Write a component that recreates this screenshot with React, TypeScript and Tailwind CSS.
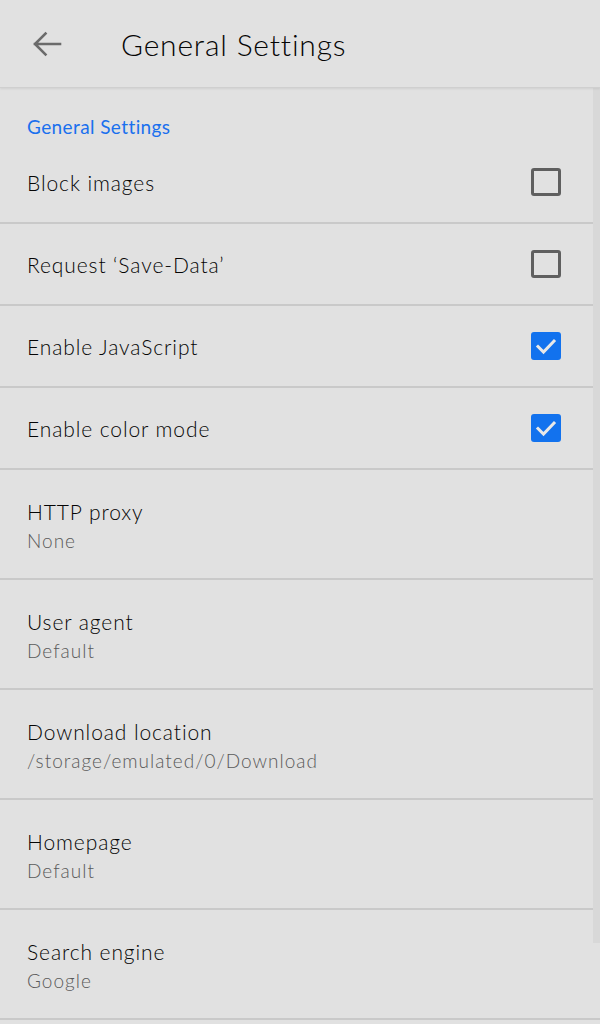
import React from "react";

const font = { fontFamily: "Lato, 'Noto Sans', sans-serif" };

function CheckBox({ checked }: { checked: boolean }) {
  if (checked) {
    return (
      <div className="w-[30px] h-[28px] rounded-[3px] bg-[#1272ee] flex items-center justify-center">
        <svg width="22" height="18" viewBox="0 0 22 18" fill="none">
          <path d="M3 9.5 L8.5 15 L19 4" stroke="#e8e8e8" strokeWidth="3" strokeLinecap="square" />
        </svg>
      </div>
    );
  }
  return <div className="w-[30px] h-[28px] rounded-[3px] border-[3px] border-[#5f5f5f]" />;
}

function ToggleRow({ label, checked }: { label: string; checked: boolean }) {
  return (
    <div className="h-[82px] border-b-2 border-[#c9c9c9] flex items-center justify-between pl-[27px] pr-[39px]">
      <span className="text-[21px] font-light text-[#050505] tracking-[0.9px] pt-[2px]">{label}</span>
      <CheckBox checked={checked} />
    </div>
  );
}

function InfoRow({ label, value }: { label: string; value: string }) {
  return (
    <div className="h-[110px] border-b-2 border-[#c9c9c9] flex flex-col justify-center pl-[27px] pt-[6px]">
      <span className="text-[21px] font-light leading-[28px] text-[#050505] tracking-[0.9px]">{label}</span>
      <span className="text-[19px] font-light leading-[30px] text-[#5a5a5a] tracking-[1px]">{value}</span>
    </div>
  );
}

export default function App() {
  return (
    <div className="w-[600px] h-[1024px] bg-[#e1e1e1] overflow-hidden flex flex-col" style={font}>
      <div className="h-[88px] shrink-0 flex items-center border-b border-[#cfcfcf] shadow-[0_1px_2px_rgba(0,0,0,0.08)] relative z-10">
        <div className="w-[121px] pl-[32px] flex items-center">
          <svg width="30" height="26" viewBox="0 0 30 26" fill="none">
            <path d="M28 13 H3 M13.5 2.5 L3 13 L13.5 23.5" stroke="#6b6b6b" strokeWidth="2.6" strokeLinecap="square" />
          </svg>
        </div>
        <span className="text-[30px] font-light text-[#050505] tracking-[0.8px] pt-[1px]">General Settings</span>
      </div>
      <div className="flex flex-1 min-h-0">
        <div className="flex-1 flex flex-col">
          <div className="h-[54px] flex items-end pl-[27px] pb-[1px]">
            <span className="text-[19px] text-[#1a70ee] tracking-[0.4px]">General Settings</span>
          </div>
          <ToggleRow label="Block images" checked={false} />
          <ToggleRow label="Request ‘Save-Data’" checked={false} />
          <ToggleRow label="Enable JavaScript" checked={true} />
          <ToggleRow label="Enable color mode" checked={true} />
          <InfoRow label="HTTP proxy" value="None" />
          <InfoRow label="User agent" value="Default" />
          <InfoRow label="Download location" value="/storage/emulated/0/Download" />
          <InfoRow label="Homepage" value="Default" />
          <InfoRow label="Search engine" value="Google" />
        </div>
      </div>
      <div className="absolute top-[88px] right-0 w-[7px] h-[855px] bg-[#d8d8d8]" />
    </div>
  );
}
